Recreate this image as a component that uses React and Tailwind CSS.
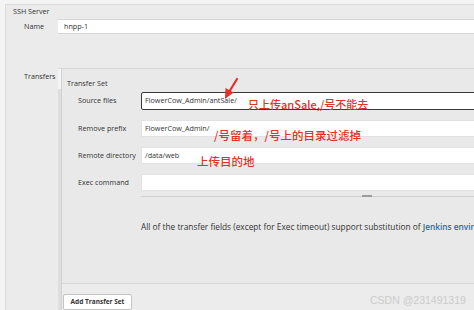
export default function App() {
  return (
    <div className="relative w-[474px] h-[310px] overflow-hidden bg-[#f4f4f4] font-['Open_Sans',sans-serif] text-[#333]">
      <div className="ml-[5px] mt-[4px] h-[306px] bg-[#ebebeb] border-l border-t border-[#dcdcdc] flex flex-col">
        {/* SSH Server header */}
        <div className="h-[16px] pl-[7px] flex items-center text-[7.2px] leading-none">SSH Server</div>

        {/* Name row */}
        <div className="flex h-[18px]">
          <div className="w-[52px] shrink-0 pl-[18px] flex items-center text-[7.2px] leading-none">Name</div>
          <div className="flex-1 bg-white border-y border-[#d6d6d6] flex items-center pl-[6px] text-[7.2px] leading-none">hnpp-1</div>
        </div>

        {/* Transfers */}
        <div className="mt-[34px] flex flex-1">
          <div className="w-[52px] shrink-0 pl-[18px] pt-[3px] text-[7.2px] leading-[10px]">Transfers</div>
          <div className="flex-1 flex border-t border-[#d6d6d6]">
            {/* drag handle */}
            <div className="w-[4px] shrink-0 flex flex-col border-r border-[#d2d2d2]">
              <div className="h-[20px] bg-[#f5f5f5]" />
              <div className="flex-1 bg-[#dedede]" />
            </div>
            <div className="flex-1 flex flex-col">
              <div className="h-[215px] flex flex-col border-b border-[#d6d6d6] bg-[#e9e9e9]">
                <div className="pl-[5px] pt-[9px] text-[7.2px] leading-[10px]">Transfer Set</div>

                <div className="mt-[4px] flex h-[18px] pl-[16px]">
                  <div className="w-[63px] shrink-0 flex items-center text-[7.2px] leading-none">Source files</div>
                  <div className="flex-1 bg-white border border-[#3a3a3a] rounded-[2px] flex items-center pl-[3px] text-[7.2px] leading-none">FlowerCow_Admin/antSale/</div>
                </div>

                <div className="mt-[10px] flex h-[17px] pl-[16px]">
                  <div className="w-[63px] shrink-0 flex items-center text-[7.2px] leading-none">Remove prefix</div>
                  <div className="flex-1 bg-white border border-[#e2e2e2] flex items-center pl-[3px] text-[7.2px] leading-none">FlowerCow_Admin/</div>
                </div>

                <div className="mt-[10px] flex h-[17px] pl-[16px]">
                  <div className="w-[63px] shrink-0 flex items-center text-[7.2px] leading-none whitespace-nowrap">Remote directory</div>
                  <div className="flex-1 bg-white border border-[#e2e2e2] flex items-center pl-[3px] text-[7.2px] leading-none">/data/web</div>
                </div>

                <div className="mt-[10px] flex h-[17px] pl-[16px]">
                  <div className="w-[63px] shrink-0 flex items-center text-[7.2px] leading-none whitespace-nowrap">Exec command</div>
                  <div className="flex-1 bg-white border border-[#e2e2e2]" />
                </div>

                <div className="relative mt-[5px] ml-[79px] border-t border-[#cfcfcf]">
                  <div className="absolute left-[221px] -top-[2px] w-[10px] h-[2px] bg-[#9c9c9c]" />
                </div>

                <div className="mt-[24px] ml-[79px] whitespace-nowrap text-[8.3px] leading-[12px]">
                  All of the transfer fields (except for Exec timeout) support substitution of{' '}
                  <span className="text-[#2f6aa1] font-semibold">Jenkins environment variables</span>
                </div>
              </div>

              <div className="pt-[2px] pl-[1px] bg-[#ececec] flex-1">
                <button className="h-[16px] w-[69px] bg-white border border-[#c4c4c4] rounded-[2px] text-[6.5px] font-bold leading-none text-[#333]">
                  Add Transfer Set
                </button>
              </div>
            </div>
          </div>
        </div>
      </div>

      {/* red annotations */}
      <svg className="absolute left-[220px] top-[74px]" width="22" height="28" viewBox="0 0 22 28">
        <line x1="17" y1="5" x2="9" y2="18" stroke="#e5302a" strokeWidth="2.2" strokeLinecap="round" />
        <polygon points="5,25 5.5,14 13.5,18.5" fill="#e5302a" />
      </svg>
      <div className="absolute left-[248px] top-[97px] text-[11px] leading-[14px] text-[#e5302a] font-medium font-['Noto_Sans_CJK_SC',sans-serif] whitespace-nowrap">
        只上传anSale,/号不能去
      </div>
      <div className="absolute left-[214px] top-[128px] text-[11.5px] leading-[14px] text-[#e5302a] font-medium font-['Noto_Sans_CJK_SC',sans-serif] whitespace-nowrap">
        /号留着，/号上的目录过滤掉
      </div>
      <div className="absolute left-[197px] top-[154px] text-[11.5px] leading-[14px] text-[#e5302a] font-medium font-['Noto_Sans_CJK_SC',sans-serif] whitespace-nowrap">
        上传目的地
      </div>

      {/* watermark */}
      <div className="absolute left-[370px] top-[293px] text-[10.5px] leading-[14px] text-[#cbcbcb] font-['Liberation_Sans',sans-serif] whitespace-nowrap">
        CSDN @231491319
      </div>
    </div>
  );
}
